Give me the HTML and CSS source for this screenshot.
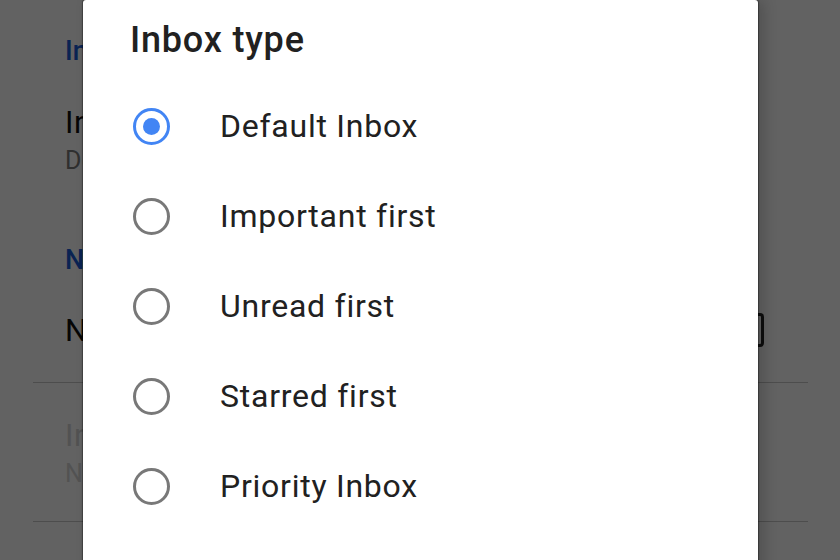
FILE: index.html
```html
<!DOCTYPE html>
<html lang="en">
<head>
<meta charset="utf-8">
<title>Inbox type</title>
<link rel="stylesheet" href="styles.css">
</head>
<body>
<div class="settings">
  <div class="sec-head first">Inbox</div>
  <div class="item">
    <div class="item-title">Inbox type</div>
    <div class="item-sub">Default Inbox</div>
  </div>
  <div class="sec-head second">Notifications</div>
  <div class="item item-row">
    <div class="item-title">Notifications</div>
    <span class="checkbox"></span>
  </div>
  <div class="divider"></div>
  <div class="item disabled">
    <div class="item-title">Inbox notifications</div>
    <div class="item-sub">Notify for every message</div>
  </div>
  <div class="divider"></div>
</div>
<div class="scrim"></div>
<div class="dialog">
  <div class="dialog-title">Inbox type</div>
  <div class="options">
    <div class="option"><span class="radio checked"></span><span class="label">Default Inbox</span></div>
    <div class="option"><span class="radio"></span><span class="label">Important first</span></div>
    <div class="option"><span class="radio"></span><span class="label">Unread first</span></div>
    <div class="option"><span class="radio"></span><span class="label">Starred first</span></div>
    <div class="option"><span class="radio"></span><span class="label">Priority Inbox</span></div>
  </div>
</div>
</body>
</html>
```
FILE: styles.css
```css
* { box-sizing: border-box; }
html, body {
  margin: 0;
  padding: 0;
}
body {
  width: 840px;
  height: 560px;
  overflow: hidden;
  position: relative;
  background: #ffffff;
  font-family: Roboto, "Noto Sans", "Liberation Sans", sans-serif;
  color: #202124;
}

/* background settings page */
.settings {
  width: 775px;
  margin-left: 33px;
  padding-top: 31px;
}
.sec-head {
  padding-left: 32px;
  font-size: 27px;
  font-weight: 500;
  line-height: 40px;
  color: #1a5bd6;
}
.sec-head.second { margin-top: 61px; }
.item { padding-left: 32px; padding-right: 44px; }
.sec-head.first + .item { margin-top: 32px; }
.sec-head.second + .item { margin-top: 31px; }
.item-title {
  font-size: 31px;
  line-height: 40px;
  color: #111111;
  letter-spacing: 0.6px;
}
.item-sub {
  font-size: 25px;
  line-height: 36px;
  color: #7a7a7a;
  letter-spacing: 0.5px;
}
.item-row {
  display: flex;
  align-items: center;
  justify-content: space-between;
}
.checkbox {
  width: 34px;
  height: 34px;
  border: 3.5px solid #222222;
  border-radius: 4px;
  margin-top: -3px;
}
.divider {
  height: 1px;
  background: #c8c8c8;
}
.item-row + .divider { margin-top: 31px; }
.disabled { margin-top: 33px; }
.disabled .item-title { color: #d6d6d6; }
.disabled .item-sub { color: #d6d6d6; }
.disabled + .divider { margin-top: 29px; }

/* scrim */
.scrim {
  position: absolute;
  inset: 0;
  background: rgba(0, 0, 0, 0.615);
}

/* dialog */
.dialog {
  position: absolute;
  left: 83px;
  top: 0;
  width: 675px;
  height: 620px;
  background: #ffffff;
  border-radius: 3px;
  box-shadow: 0 0 1px 1px rgba(0, 0, 0, 0.35), 6px 0 14px rgba(0, 0, 0, 0.18);
}
.dialog-title {
  padding-left: 47px;
  font-size: 36px;
  font-weight: 500;
  line-height: 81px;
  letter-spacing: 0.8px;
  color: #212121;
}
.options {
  display: flex;
  flex-direction: column;
}
.option {
  height: 90px;
  display: flex;
  align-items: center;
  padding-left: 50px;
  gap: 50px;
}
.radio {
  flex: none;
  width: 37px;
  height: 37px;
  border-radius: 50%;
  border: 3.6px solid #787878;
  display: flex;
  align-items: center;
  justify-content: center;
}
.radio.checked {
  border-color: #4285f4;
}
.radio.checked::after {
  content: "";
  width: 17px;
  height: 17px;
  border-radius: 50%;
  background: #4285f4;
}
.label {
  font-size: 32px;
  letter-spacing: 0.75px;
  color: #212121;
}
```
